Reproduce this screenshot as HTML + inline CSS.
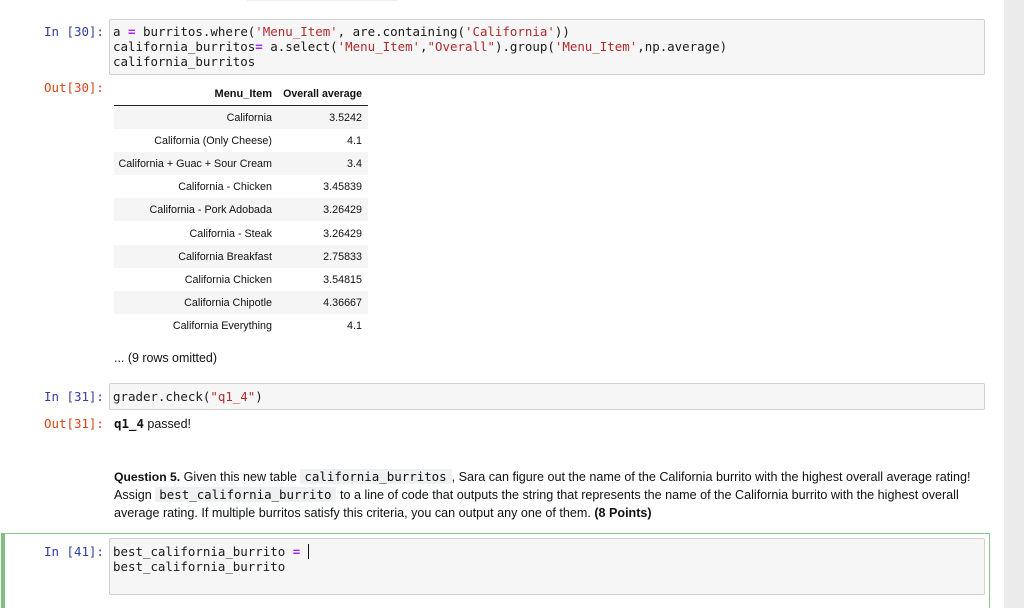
<!DOCTYPE html>
<html>
<head>
<meta charset="utf-8">
<style>
html,body{margin:0;padding:0;background:#fff;}
#p{position:relative;width:1024px;height:608px;overflow:hidden;background:#fff;font-family:"Liberation Sans",sans-serif;color:#111;}
.a{position:absolute;white-space:pre;}
.m{font-family:"DejaVu Sans Mono","Liberation Mono",monospace;font-size:12.45px;line-height:15px;color:#1a1a1a;}
.in{color:#303f9f;}
.out{color:#d84315;}
.cell{position:absolute;left:109px;width:874px;background:#f6f6f6;border:1px solid #d0d0d0;border-radius:2px;}
.s{color:#b02a2a;}
.o{color:#aa22ff;font-weight:bold;}
.row{position:absolute;left:114px;width:254px;height:23px;}
.g{background:#f5f5f5;}
.t{font-size:10.75px;line-height:14px;color:#111;text-align:right;}
.c1{left:100px;width:172px;}
.c2{left:282px;width:80px;}
.b{font-size:12.58px;line-height:18px;color:#111;left:114px;}
.b b.q{font-size:12.15px;}
.code{background:#eff0f1;border-radius:2px;font-family:"DejaVu Sans Mono",monospace;font-size:12.45px;padding:0 5px 0 4px;}
</style>
</head>
<body>
<div id="p">
<div class="a" style="left:1px;top:533px;width:989px;height:1px;background:#8cc68e;"></div>
<div class="a" style="left:989px;top:533px;width:1px;height:75px;background:#8cc68e;"></div>
<div class="a" style="left:1px;top:533px;width:4px;height:75px;background:#7fbf7f;"></div>

<div class="a" style="left:247px;top:0;width:150px;height:1px;background:#eee;"></div>
<div class="a" style="left:1004px;top:0;width:20px;height:608px;background:#ebebeb;"></div>

<div class="a m in" style="left:44px;top:24px;">In [30]:</div>
<div class="cell" style="top:19px;height:54px;"></div>
<div class="a m" style="left:113px;top:24px;">a <span class="o">=</span> burritos.where(<span class="s">'Menu_Item'</span>, are.containing(<span class="s">'California'</span>))
california_burritos<span class="o">=</span> a.select(<span class="s">'Menu_Item'</span>,<span class="s">"Overall"</span>).group(<span class="s">'Menu_Item'</span>,np.average)
california_burritos</div>

<div class="a m out" style="left:44px;top:80px;">Out[30]:</div>
<div class="a t c1" style="top:87px;font-weight:bold;font-size:11px;">Menu_Item</div>
<div class="a t c2" style="top:87px;font-weight:bold;font-size:10.6px;">Overall average</div>
<div class="a" style="left:114px;top:105px;width:254px;height:1px;background:#222;"></div>

<div class="row g" style="top:106px;"></div>
<div class="row g" style="top:152px;"></div>
<div class="row g" style="top:198px;"></div>
<div class="row g" style="top:245px;"></div>
<div class="row g" style="top:291px;"></div>

<div class="a t c1" style="top:111px;">California</div><div class="a t c2" style="top:111px;">3.5242</div>
<div class="a t c1" style="top:134px;">California (Only Cheese)</div><div class="a t c2" style="top:134px;">4.1</div>
<div class="a t c1" style="top:157px;">California + Guac + Sour Cream</div><div class="a t c2" style="top:157px;">3.4</div>
<div class="a t c1" style="top:180px;">California - Chicken</div><div class="a t c2" style="top:180px;">3.45839</div>
<div class="a t c1" style="top:203px;">California - Pork Adobada</div><div class="a t c2" style="top:203px;">3.26429</div>
<div class="a t c1" style="top:227px;">California - Steak</div><div class="a t c2" style="top:227px;">3.26429</div>
<div class="a t c1" style="top:250px;">California Breakfast</div><div class="a t c2" style="top:250px;">2.75833</div>
<div class="a t c1" style="top:273px;">California Chicken</div><div class="a t c2" style="top:273px;">3.54815</div>
<div class="a t c1" style="top:296px;">California Chipotle</div><div class="a t c2" style="top:296px;">4.36667</div>
<div class="a t c1" style="top:319px;">California Everything</div><div class="a t c2" style="top:319px;">4.1</div>

<div class="a" style="left:114px;top:351px;font-size:12.45px;line-height:15px;color:#111;">... (9 rows omitted)</div>

<div class="a m in" style="left:44px;top:389px;">In [31]:</div>
<div class="cell" style="top:383px;height:25px;"></div>
<div class="a m" style="left:113px;top:389px;">grader.check(<span class="s">"q1_4"</span>)</div>

<div class="a m out" style="left:44px;top:416px;">Out[31]:</div>
<div class="a" style="left:114px;top:416px;font-size:12.45px;line-height:16px;color:#111;"><b style="font-family:'DejaVu Sans Mono',monospace;font-size:12.45px;">q1_4</b> passed!</div>

<div class="a b" style="top:468px;"><b class="q">Question 5.</b> Given this new table <span class="code">california_burritos</span>, Sara can figure out the name of the California burrito with the highest overall average rating!</div>
<div class="a b" style="top:486px;">Assign <span class="code">best_california_burrito</span> to a line of code that outputs the string that represents the name of the California burrito with the highest overall</div>
<div class="a b" style="top:504px;">average rating. If multiple burritos satisfy this criteria, you can output any one of them. <b>(8 Points)</b></div>

<div class="a m in" style="left:44px;top:544px;">In [41]:</div>
<div class="cell" style="top:538px;height:55px;"></div>
<div class="a m" style="left:113px;top:544px;">best_california_burrito <span class="o">=</span>
best_california_burrito</div>
<div class="a" style="left:308px;top:544px;width:1px;height:15px;background:#111;"></div>
</div>
</body>
</html>
